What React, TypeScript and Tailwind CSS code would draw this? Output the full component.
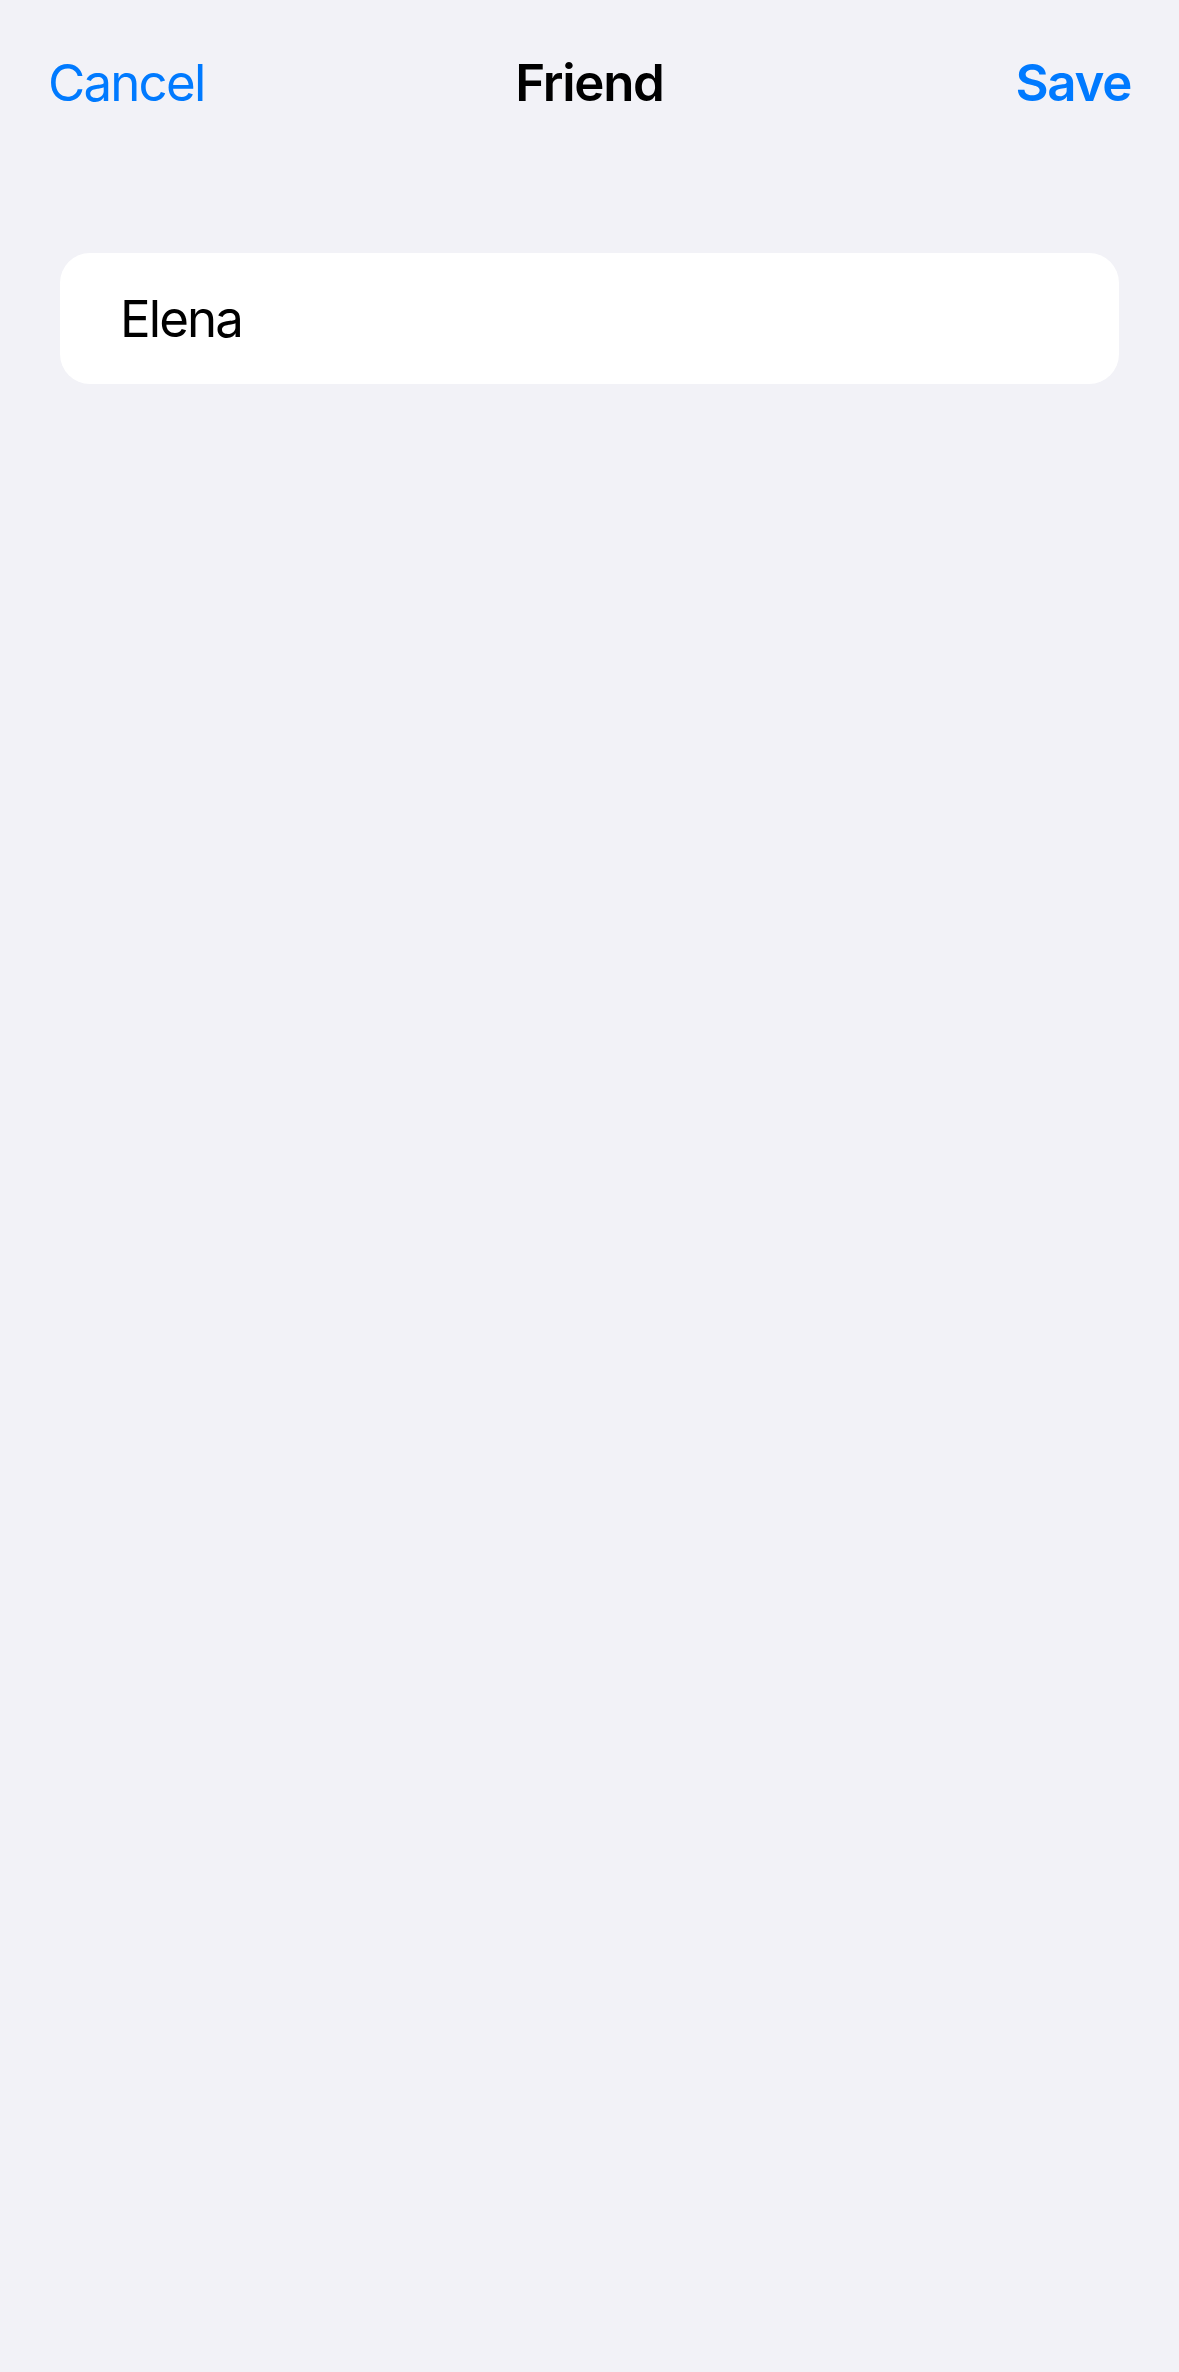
export default function App() {
  return (
    <div className="min-h-[2372px] w-full bg-[#f2f2f7] font-['Inter','Noto_Sans',sans-serif] antialiased">
      <header className="grid grid-cols-[1fr_auto_1fr] items-center px-[48px] pt-[52px]">
        <button className="justify-self-start text-[51px] leading-[61px] tracking-[-1.8px] text-[#007aff]">
          Cancel
        </button>
        <h1 className="text-[51px] font-semibold leading-[61px] tracking-[-1.3px] text-black">Friend</h1>
        <button className="justify-self-end text-[51px] font-semibold leading-[61px] tracking-[-1.3px] text-[#007aff]">
          Save
        </button>
      </header>

      <main className="px-[60px] pt-[140px]">
        <div className="flex h-[131px] items-center rounded-[30px] bg-white pl-[60px]">
          <span className="text-[51px] leading-[61px] tracking-[-1.9px] text-black">Elena</span>
        </div>
      </main>
    </div>
  );
}
